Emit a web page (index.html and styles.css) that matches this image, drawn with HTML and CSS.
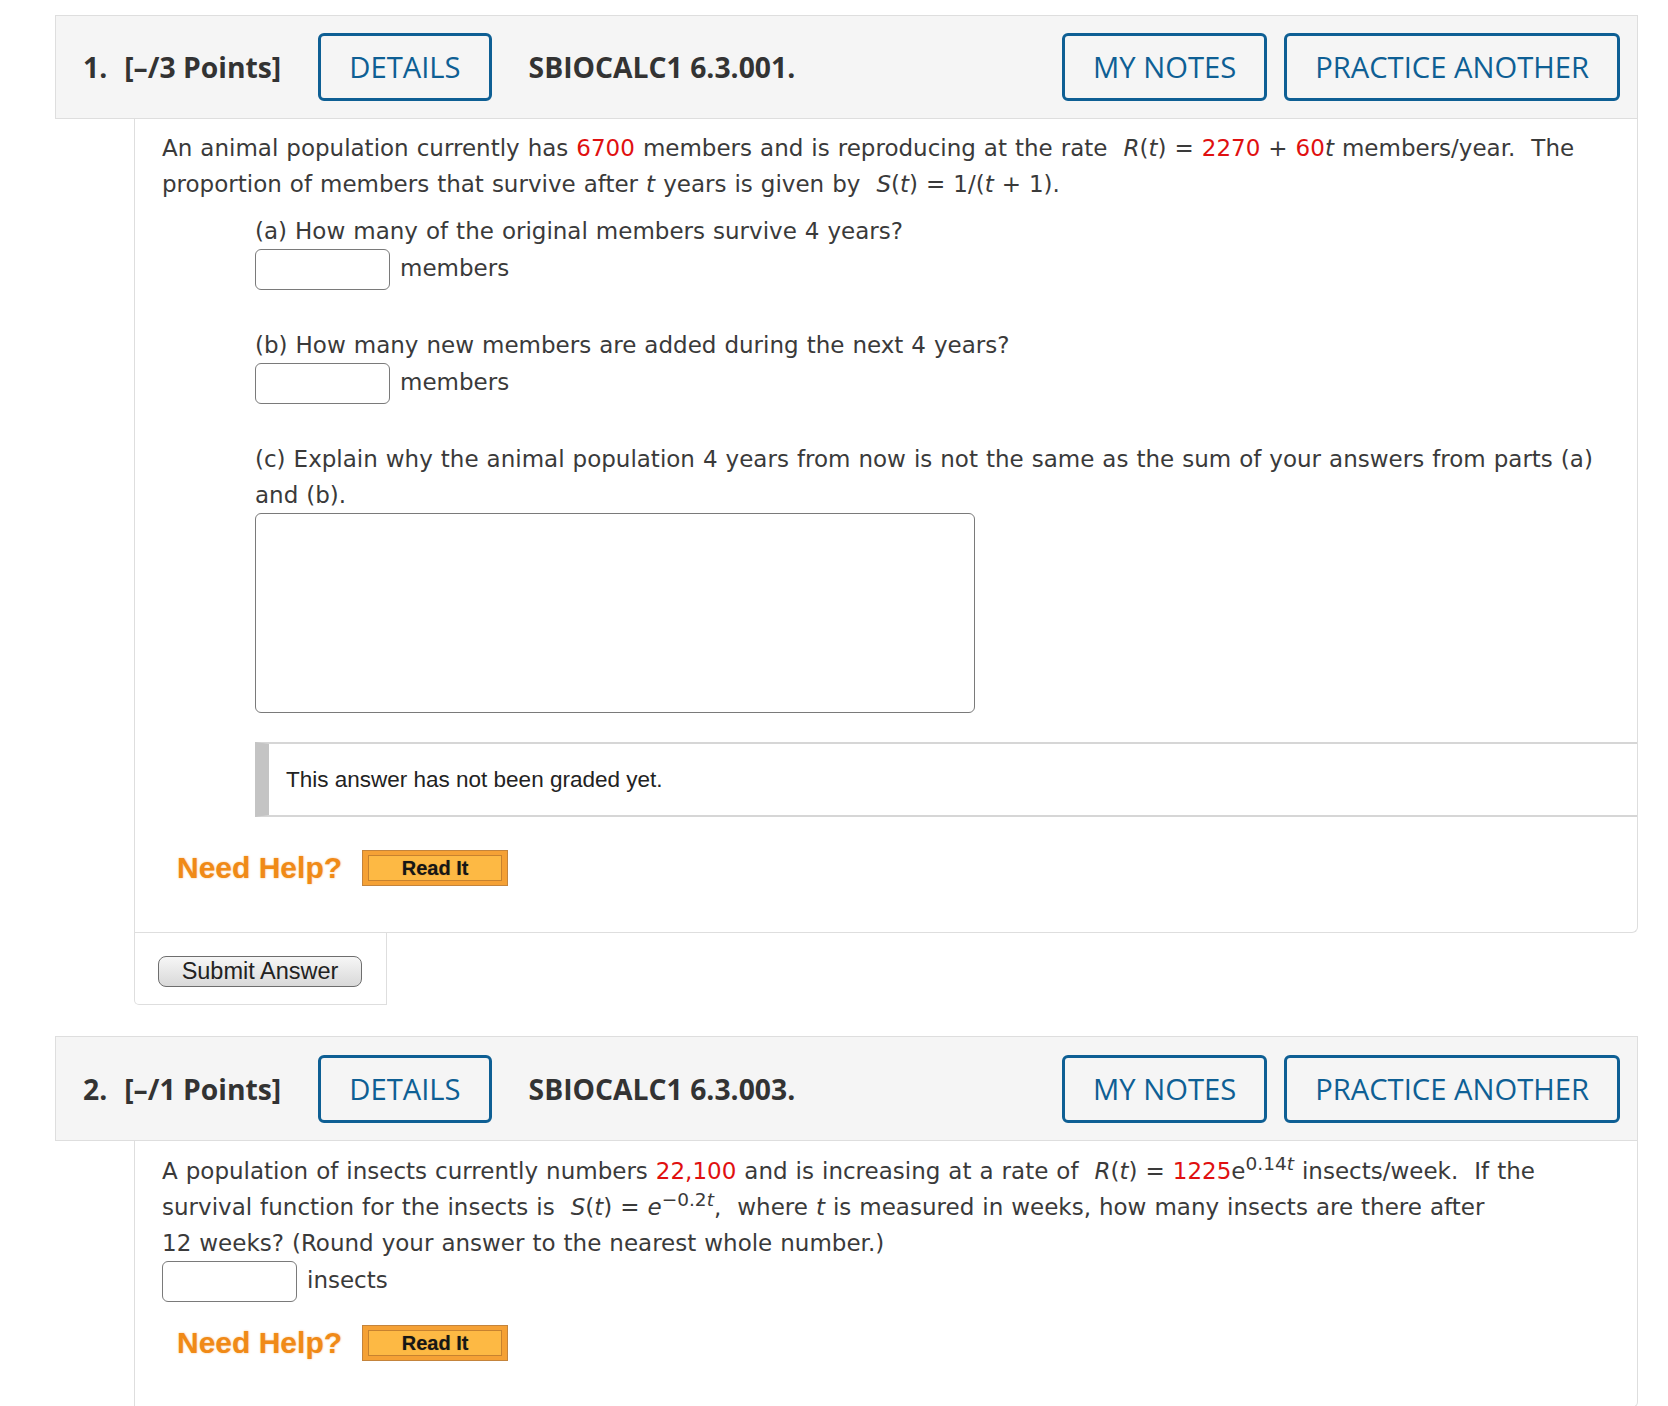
FILE: index.html
```html
<!DOCTYPE html>
<html lang="en">
<head>
<meta charset="utf-8">
<title>SBIOCALC1 6.3</title>
<link rel="stylesheet" href="styles.css">
</head>
<body>
<div class="page">

  <section class="question">
    <div class="q-header">
      <span class="q-num">1.</span>
      <span class="q-points">[–/3 Points]</span>
      <span class="hbtn">DETAILS</span>
      <span class="q-code">SBIOCALC1 6.3.001.</span>
      <div class="hbtn-group">
        <span class="hbtn">MY NOTES</span>
        <span class="hbtn">PRACTICE ANOTHER</span>
      </div>
    </div>
    <div class="q-body">
      <p class="stmt">An animal population currently has <span class="red">6700</span> members and is reproducing at the rate&nbsp; <i>R</i>(<i>t</i>) = <span class="red">2270</span> + <span class="red">60</span><i>t</i> members/year.&nbsp; The proportion of members that survive after <i>t</i> years is given by&nbsp; <i>S</i>(<i>t</i>) = 1/(<i>t</i> + 1).</p>

      <div class="part">
        <p>(a) How many of the original members survive 4 years?</p>
        <div class="answer-row"><span class="blank"></span><span class="unit">members</span></div>
      </div>

      <div class="part">
        <p>(b) How many new members are added during the next 4 years?</p>
        <div class="answer-row"><span class="blank"></span><span class="unit">members</span></div>
      </div>

      <div class="part part-c">
        <p>(c) Explain why the animal population 4 years from now is not the same as the sum of your answers from parts (a) and (b).</p>
        <div class="essay"></div>
      </div>

      <div class="graded">This answer has not been graded yet.</div>

      <div class="help">
        <span class="need-help">Need Help?</span>
        <span class="read-it"><span>Read It</span></span>
      </div>
    </div>
    <div class="q-submit"><span class="submit">Submit Answer</span></div>
  </section>

  <section class="question">
    <div class="q-header q-header-2">
      <span class="q-num">2.</span>
      <span class="q-points">[–/1 Points]</span>
      <span class="hbtn">DETAILS</span>
      <span class="q-code">SBIOCALC1 6.3.003.</span>
      <div class="hbtn-group">
        <span class="hbtn">MY NOTES</span>
        <span class="hbtn">PRACTICE ANOTHER</span>
      </div>
    </div>
    <div class="q-body q-body-2">
      <p class="stmt2">A population of insects currently numbers <span class="red">22,100</span> and is increasing at a rate of&nbsp; <i>R</i>(<i>t</i>) = <span class="red">1225</span>e<span class="sup">0.14<i>t</i></span> insects/week.&nbsp; If the survival function for the insects is&nbsp; <i>S</i>(<i>t</i>) = <i>e</i><span class="sup">−0.2<i>t</i></span>,&nbsp; where <i>t</i> is measured in weeks, how many insects are there after 12&nbsp;weeks? (Round your answer to the nearest whole number.)</p>
      <div class="answer-row"><span class="blank"></span><span class="unit">insects</span></div>
      <div class="help help-2">
        <span class="need-help">Need Help?</span>
        <span class="read-it"><span>Read It</span></span>
      </div>
    </div>
  </section>

</div>
</body>
</html>
```

FILE: styles.css
```css
html, body {
  margin: 0;
  padding: 0;
  background: #ffffff;
}

body {
  font-family: "DejaVu Sans", Verdana, sans-serif;
  color: #3a3a3a;
}

.page {
  padding: 15px 0 0 55px;
}

.question {
  width: 1583px;
}

.question + .question {
  margin-top: 31px;
}

/* ---------- header bar ---------- */
.q-header {
  display: flex;
  align-items: center;
  height: 104px;
  box-sizing: border-box;
  border: 1px solid #dedede;
  background: #f5f5f5;
  padding: 0 17px 0 27px;
  font-family: "Open Sans", sans-serif;
  font-size: 28.3px;
  font-weight: 700;
  color: #333333;
}

.q-header-2 {
  height: 105px;
}

.q-num {
  margin-right: 17px;
}

.q-points {
  margin-right: 37px;
}

.q-code {
  margin-left: 37px;
}

.hbtn {
  display: inline-flex;
  align-items: center;
  height: 68px;
  box-sizing: border-box;
  border: 3px solid #0e5f94;
  border-radius: 6px;
  padding: 0 28px;
  font-family: "Open Sans", sans-serif;
  font-size: 29.2px;
  font-weight: 500;
  color: #0e5f94;
  white-space: nowrap;
}

.hbtn-group {
  margin-left: auto;
  display: flex;
  gap: 17px;
}

/* ---------- question body ---------- */
.q-body {
  margin-left: 79px;
  border: 1px solid #dedede;
  border-top: 0;
  border-radius: 0 0 6px 0;
  padding: 11px 18px 46px 27px;
  font-size: 23px;
  line-height: 36px;
  word-spacing: 0.7px;
}

.q-body-2 {
  padding-top: 12px;
}

.q-body i {
  font-style: italic;
}

.red {
  color: #e01010;
}

.stmt {
  margin: 0 0 11px;
  max-width: 1445px;
}

.stmt2 {
  margin: 0;
  max-width: 1445px;
}

.sup {
  font-size: 18.5px;
  line-height: 0;
  vertical-align: 9px;
}

.part {
  margin-left: 93px;
  margin-bottom: 37px;
}

.part p {
  margin: 0;
}

.part-c {
  margin-bottom: 29px;
}

.answer-row {
  display: flex;
  align-items: center;
  gap: 10px;
  height: 41px;
}

.unit {
  margin-bottom: 4px;
}

.blank {
  display: block;
  width: 135px;
  height: 41px;
  box-sizing: border-box;
  border: 1px solid #7a7a7a;
  border-radius: 6px;
  background: #ffffff;
}

.essay {
  width: 720px;
  height: 200px;
  box-sizing: border-box;
  border: 1px solid #7a7a7a;
  border-radius: 6px;
  background: #ffffff;
}

.graded {
  margin-left: 93px;
  margin-right: -18px;
  height: 75px;
  box-sizing: border-box;
  display: flex;
  align-items: center;
  border-top: 2px solid #d6d6d6;
  border-bottom: 2px solid #d6d6d6;
  border-left: 14px solid #c4c4c4;
  padding-left: 17px;
  font-family: "Liberation Sans", Arial, sans-serif;
  font-size: 22.5px;
  word-spacing: 0;
  color: #222222;
  margin-bottom: 33px;
}

/* ---------- help row ---------- */
.help {
  margin-left: 15px;
  display: flex;
  align-items: center;
  gap: 20px;
  height: 36px;
  word-spacing: 0;
}

.help-2 {
  margin-top: 23px;
}

.need-help {
  font-family: "Liberation Sans", Arial, sans-serif;
  font-weight: 700;
  font-size: 30px;
  color: #f08a17;
  text-shadow: 0 0 2px rgba(240, 138, 23, 0.55);
}

.read-it {
  display: flex;
  width: 146px;
  height: 36px;
  box-sizing: border-box;
  border: 1px solid #c4843c;
  background: #f5a135;
  padding: 4px 5px;
}

.read-it span {
  flex: 1;
  display: flex;
  align-items: center;
  justify-content: center;
  border: 1px solid #c7822f;
  background: #fdb944;
  font-family: "Liberation Sans", Arial, sans-serif;
  font-weight: 700;
  font-size: 20px;
  color: #161616;
  text-shadow: 0 0 1px rgba(0, 0, 0, 0.35);
}

/* ---------- submit area ---------- */
.q-submit {
  margin-left: 79px;
  width: 253px;
  height: 72px;
  box-sizing: border-box;
  border: 1px solid #dedede;
  border-top: 0;
  border-radius: 0 0 0 5px;
  padding: 23px 0 0 23px;
}

.submit {
  display: flex;
  align-items: center;
  justify-content: center;
  width: 204px;
  height: 31px;
  box-sizing: border-box;
  border: 1px solid #6e6e6e;
  border-radius: 8px;
  background: linear-gradient(#f6f6f6, #d9d9d9);
  font-family: "Liberation Sans", Arial, sans-serif;
  font-size: 23.5px;
  color: #222222;
}
```
